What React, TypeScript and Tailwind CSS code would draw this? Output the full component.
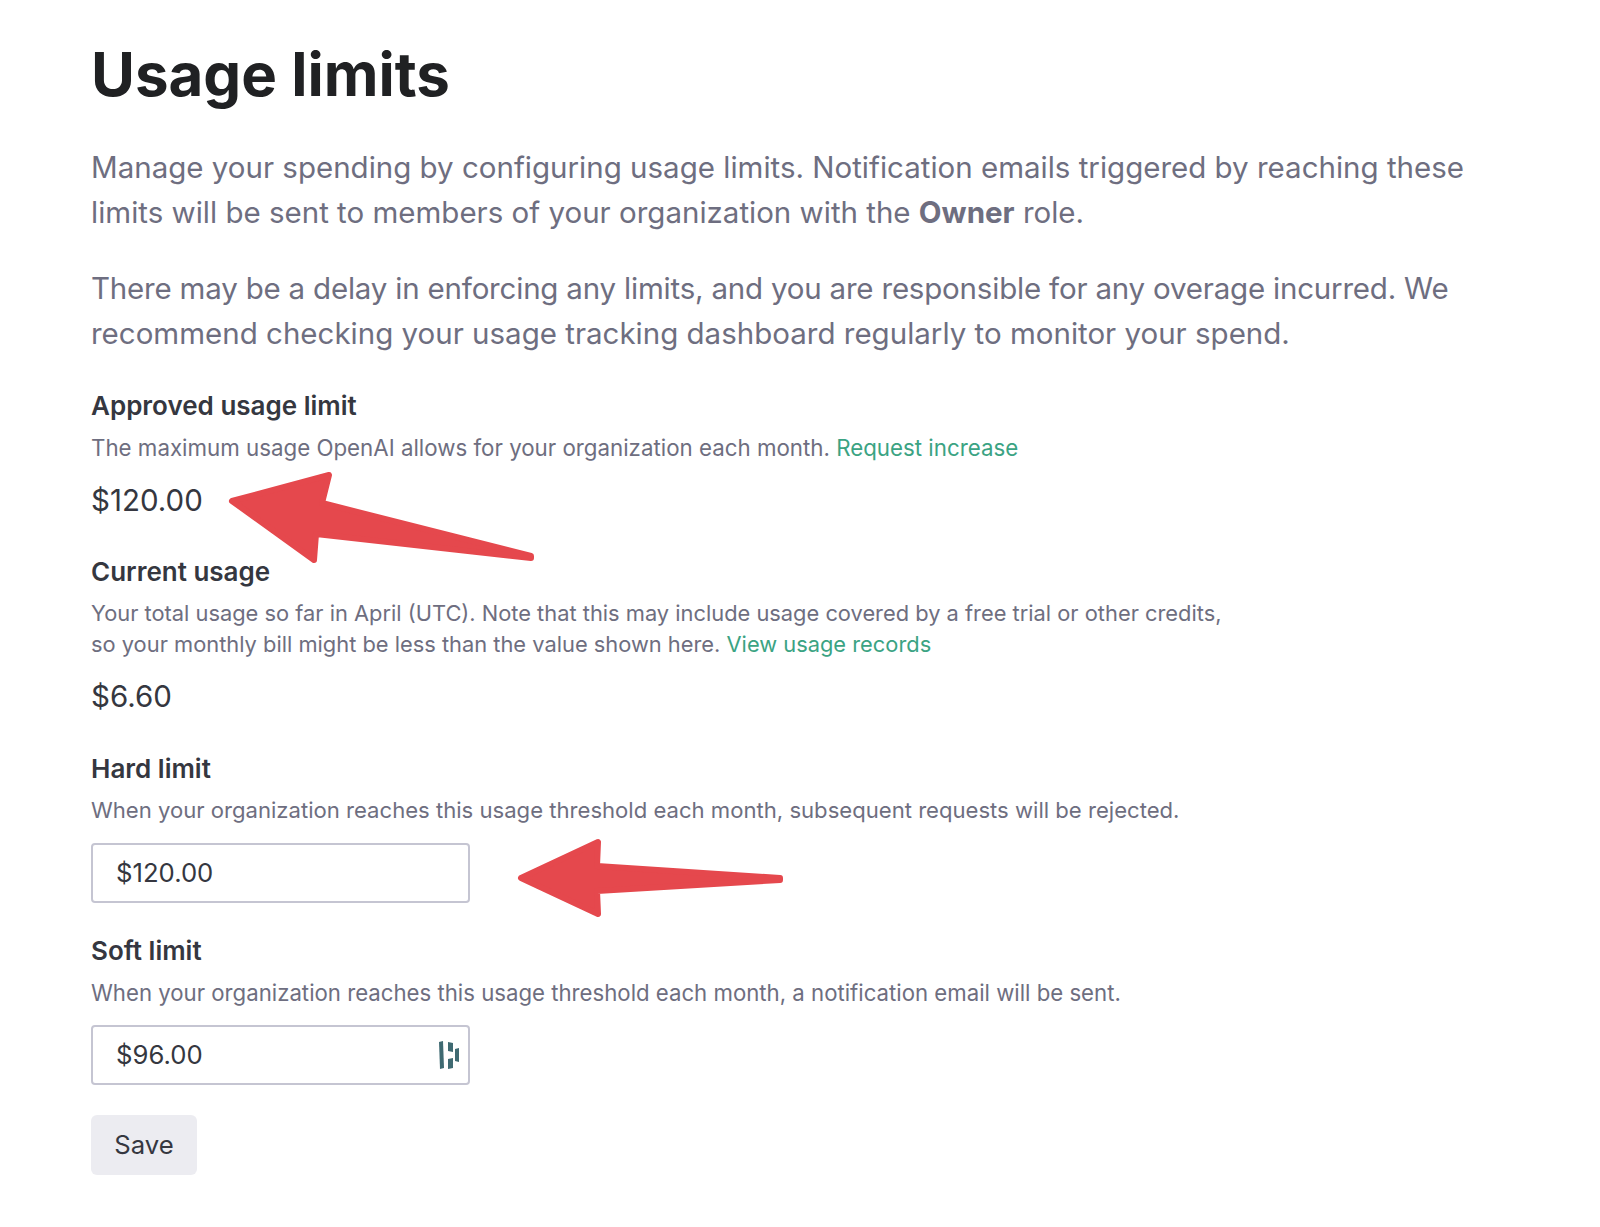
const font = "font-['Inter','Noto_Sans',sans-serif]";

const Section = ({
  title,
  size = 'text-[21.85px]',
  children,
}: {
  title: string;
  size?: string;
  children: React.ReactNode;
}) => (
  <div>
    <h2 className="text-[26px] leading-[32px] font-semibold text-[#353740]">{title}</h2>
    <div className={`mt-[10px] leading-[31px] text-[#6e6e80] ${size}`}>{children}</div>
  </div>
);

const Field = ({ value, icon }: { value: string; icon?: boolean }) => (
  <div className="mt-[17px] flex h-[60px] w-[379px] items-center justify-between rounded-[4px] border-2 border-[#c5c5d2] bg-white pl-[23px] pr-[8px] text-[25.7px] text-[#353740]">
    <span>{value}</span>
    {icon && (
      <svg width="22" height="28" viewBox="0 0 22 28" fill="#3f6a72">
        <path d="M1 1 L5 0 L6 27 L2 28 Z" />
        <path d="M10 1 L15 2 L15 11 L10 10 Z" />
        <path d="M10 18 L15 17 L15 27 L10 28 Z" />
        <path d="M17 8 L21 7 L21 21 L17 20 Z" />
      </svg>
    )}
  </div>
);

export default function App() {
  return (
    <div className={`${font} relative h-[1227px] w-[1600px] overflow-hidden bg-white pl-[91px] pt-[36px]`}>
      <h1 className="text-[60px] leading-[76px] font-bold text-[#202123]">Usage limits</h1>

      <p className="mt-[33px] w-[1420px] text-[29.5px] leading-[45px] text-[#6e6e80]">
        Manage your spending by configuring usage limits. Notification emails triggered by reaching these
        limits will be sent to members of your organization with the <b className="font-bold">Owner</b> role.
      </p>
      <p className="mt-[31px] w-[1420px] text-[29.5px] leading-[45px] text-[#6e6e80]">
        <span className="tracking-[-0.2px]">
          There may be a delay in enforcing any limits, and you are responsible for any overage incurred. We
        </span>{' '}
        recommend checking your usage tracking dashboard regularly to monitor your spend.
      </p>

      <div className="mt-[34px]">
        <Section title="Approved usage limit" size="text-[22.3px]">
          The maximum usage OpenAI allows for your organization each month.{' '}
          <a className="text-[#3ba383]">Request increase</a>
        </Section>
        <div className="mt-[17px] text-[29.5px] leading-[40px] text-[#353740]">$120.00</div>
      </div>

      <div className="mt-[36px]">
        <Section title="Current usage">
          Your total usage so far in April (UTC). Note that this may include usage covered by a free trial or other credits,
          <br />
          so your monthly bill might be less than the value shown here.{' '}
          <a className="text-[#3ba383]">View usage records</a>
        </Section>
        <div className="mt-[16px] text-[29.5px] leading-[40px] text-[#353740]">$6.60</div>
      </div>

      <div className="mt-[37px]">
        <Section title="Hard limit" size="text-[22.1px]">
          When your organization reaches this usage threshold each month, subsequent requests will be rejected.
        </Section>
        <Field value="$120.00" />
      </div>

      <div className="mt-[32px]">
        <Section title="Soft limit" size="text-[22.2px]">
          When your organization reaches this usage threshold each month, a notification email will be sent.
        </Section>
        <Field value="$96.00" icon />
      </div>

      <button className="mt-[30px] h-[60px] w-[106px] rounded-[6px] bg-[#ececf1] text-[25.7px] text-[#353740]">Save</button>

      <svg className="absolute left-0 top-0" width="1600" height="1227" fill="#e5484d" stroke="#e5484d" strokeWidth="6" strokeLinejoin="round">
        <path d="M232 501 L329 475 L322 503 L531 556 L531 558 L316 534 L314 560 Z" />
        <path d="M521 878 L598 842 L597 866 L780 878 L780 880 L597 891 L598 914 Z" />
      </svg>
    </div>
  );
}
